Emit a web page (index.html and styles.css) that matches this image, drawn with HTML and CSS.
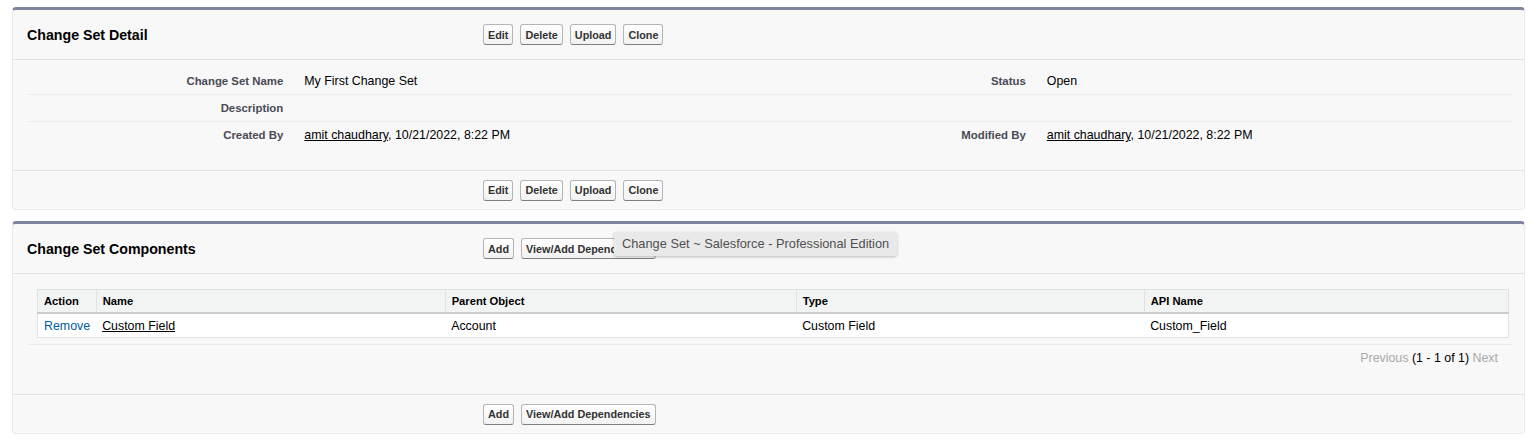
FILE: index.html
```html
<!DOCTYPE html>
<html lang="en">
<head>
    <meta charset="UTF-8">
    <title>Change Set ~ Salesforce - Professional Edition</title>
    <link rel="stylesheet" href="styles.css">
</head>
<body>
    <div class="page-block">
        <div class="pb-header">
            <h2 class="pb-title">Change Set Detail</h2>
            <div class="pb-buttons">
                <button class="btn">Edit</button>
                <button class="btn">Delete</button>
                <button class="btn">Upload</button>
                <button class="btn">Clone</button>
            </div>
        </div>
        <div class="pb-body detail-body">
            <div class="detail-row">
                <div class="label-col">Change Set Name</div>
                <div class="data-col">My First Change Set</div>
                <div class="label-col">Status</div>
                <div class="data-col">Open</div>
            </div>
            <div class="detail-row">
                <div class="label-col">Description</div>
                <div class="data-col"></div>
                <div class="label-col"></div>
                <div class="data-col"></div>
            </div>
            <div class="detail-row last">
                <div class="label-col">Created By</div>
                <div class="data-col"><a href="#">amit chaudhary</a>, 10/21/2022, 8:22 PM</div>
                <div class="label-col">Modified By</div>
                <div class="data-col"><a href="#">amit chaudhary</a>, 10/21/2022, 8:22 PM</div>
            </div>
        </div>
        <div class="pb-footer">
            <div class="pb-buttons">
                <button class="btn">Edit</button>
                <button class="btn">Delete</button>
                <button class="btn">Upload</button>
                <button class="btn">Clone</button>
            </div>
        </div>
    </div>

    <div class="page-block">
        <div class="pb-header">
            <h2 class="pb-title">Change Set Components</h2>
            <div class="pb-buttons">
                <button class="btn">Add</button>
                <button class="btn">View/Add Dependencies</button>
                <div class="tooltip">Change Set ~ Salesforce - Professional Edition</div>
            </div>
        </div>
        <div class="pb-body list-body">
            <table class="list">
                <thead>
                    <tr>
                        <th class="action-col">Action</th>
                        <th class="name-col">Name</th>
                        <th class="parent-col">Parent Object</th>
                        <th class="type-col">Type</th>
                        <th>API Name</th>
                    </tr>
                </thead>
                <tbody>
                    <tr>
                        <td><a class="action-link" href="#">Remove</a></td>
                        <td><a href="#">Custom Field</a></td>
                        <td>Account</td>
                        <td>Custom Field</td>
                        <td>Custom_Field</td>
                    </tr>
                </tbody>
            </table>
            <div class="paginator">
                <span class="muted">Previous</span> (1 - 1 of 1) <span class="muted">Next</span>
            </div>
        </div>
        <div class="pb-footer">
            <div class="pb-buttons">
                <button class="btn">Add</button>
                <button class="btn">View/Add Dependencies</button>
            </div>
        </div>
    </div>
</body>
</html>
```

FILE: styles.css
```css
body {
    margin: 0;
    padding: 7px 11px 0 12px;
    background: #fff;
    font-family: "Liberation Sans", Arial, sans-serif;
    font-size: 12.4px;
    color: #000;
}

a {
    color: #000;
    text-decoration: underline;
}

.page-block {
    background: #f8f8f8;
    border: 1px solid #eaeaea;
    border-top: 3px solid #7d859c;
    border-radius: 4px;
    margin-bottom: 11px;
}

.pb-header {
    display: grid;
    grid-template-columns: 456px auto;
    align-items: center;
    height: 49px;
    padding-left: 14px;
    border-bottom: 1px solid #e3e3e3;
}

.pb-title {
    margin: 0;
    font-size: 14.2px;
    font-weight: bold;
    color: #000;
}

.pb-buttons {
    display: flex;
    gap: 7px;
    position: relative;
}

.pb-footer {
    height: 38px;
    display: grid;
    grid-template-columns: 456px auto;
    align-items: center;
    padding-left: 14px;
    border-top: 1px solid #e3e3e3;
}

.pb-footer .pb-buttons {
    grid-column: 2;
}

.btn {
    font-family: "Liberation Sans", Arial, sans-serif;
    font-size: 10.8px;
    font-weight: bold;
    color: #333;
    background: linear-gradient(#fff, #f2f2f2);
    border: 1px solid #b5b5b5;
    border-bottom-color: #7f7f7f;
    border-radius: 3px;
    height: 21px;
    padding: 0 4px;
    cursor: pointer;
}

.tooltip {
    position: absolute;
    left: 131px;
    top: -6px;
    background: #e9e9e9;
    color: #505050;
    font-size: 12.8px;
    padding: 4px 8px 5px 8px;
    border-radius: 3px;
    box-shadow: 0 1px 3px rgba(0, 0, 0, 0.25);
    white-space: nowrap;
}

.detail-body {
    padding: 8px 12px 22px 14px;
}

.detail-row {
    display: grid;
    grid-template-columns: 18% 32% 18% 32%;
    height: 26px;
    align-items: center;
    border-bottom: 1px solid #ececec;
}

.detail-row.last {
    border-bottom: none;
}

.label-col {
    text-align: right;
    padding-right: 11px;
    font-size: 11.4px;
    font-weight: bold;
    color: #4a4a56;
}

.data-col {
    padding-left: 10px;
}

.list-body {
    padding: 15px 12px 0 14px;
    height: 105px;
}

.list {
    width: calc(100% - 13px);
    margin-left: 10px;
    border-collapse: collapse;
    background: #fff;
    border: 1px solid #e0e3e5;
}

.list th {
    background: #f2f3f3;
    text-align: left;
    font-size: 11.2px;
    font-weight: bold;
    color: #000;
    height: 22px;
    padding: 0 6px;
    border-left: 1px solid #e0e3e5;
    border-bottom: 2px solid #cccccc;
}

.list th:first-child {
    border-left: none;
}

.list td {
    height: 23px;
    padding: 0 6px;
    border-bottom: 1px solid #e3e3e3;
}

.action-col { width: 45px; }
.name-col { width: 336px; }
.parent-col { width: 338px; }
.type-col { width: 335px; }

.action-link {
    color: #015ba7;
    text-decoration: none;
}

.paginator {
    margin-top: 6px;
    border-top: 1px solid #ececec;
    padding: 6px 14px 0 0;
    text-align: right;
    color: #000;
}

.muted {
    color: #a8a8a8;
}
```
